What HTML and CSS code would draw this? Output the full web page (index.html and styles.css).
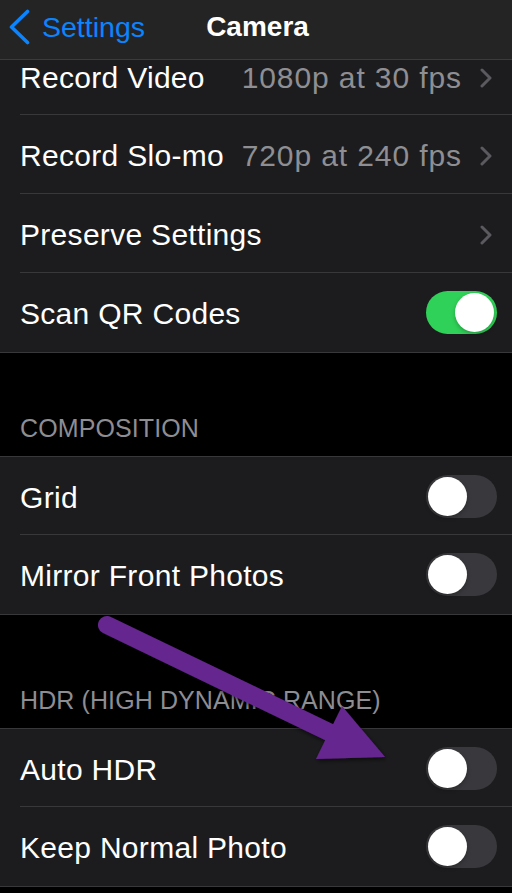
FILE: index.html
```html
<!DOCTYPE html>
<html lang="en">
<head>
<meta charset="utf-8">
<title>Camera</title>
<link rel="stylesheet" href="styles.css">
</head>
<body>
<div class="screen">
  <header class="nav">
    <div class="nav-left">
      <svg class="back-icon" width="22" height="36" viewBox="0 0 22 36"><path d="M19.5 2.5 L3.5 18 L19.5 33.5" fill="none" stroke="#0a84ff" stroke-width="3.6" stroke-linecap="round" stroke-linejoin="round"/></svg>
      <span class="back-label">Settings</span>
    </div>
    <div class="nav-title">Camera</div>
    <div class="nav-right"></div>
  </header>

  <main class="content">
    <section class="group">
      <div class="row">
        <span class="label">Record Video</span>
        <span class="value">1080p at 30 fps</span>
        <svg class="chev" width="14" height="20" viewBox="0 0 14 20"><path d="M3 2 L11 10 L3 18" fill="none" stroke="#5a5a5f" stroke-width="3" stroke-linecap="round" stroke-linejoin="round"/></svg>
      </div>
      <div class="row">
        <span class="label">Record Slo-mo</span>
        <span class="value">720p at 240 fps</span>
        <svg class="chev" width="14" height="20" viewBox="0 0 14 20"><path d="M3 2 L11 10 L3 18" fill="none" stroke="#5a5a5f" stroke-width="3" stroke-linecap="round" stroke-linejoin="round"/></svg>
      </div>
      <div class="row">
        <span class="label">Preserve Settings</span>
        <span class="value"></span>
        <svg class="chev" width="14" height="20" viewBox="0 0 14 20"><path d="M3 2 L11 10 L3 18" fill="none" stroke="#5a5a5f" stroke-width="3" stroke-linecap="round" stroke-linejoin="round"/></svg>
      </div>
      <div class="row row-toggle">
        <span class="label">Scan QR Codes</span>
        <span class="switch on"><span class="knob"></span></span>
      </div>
    </section>

    <div class="section-header first">COMPOSITION</div>
    <section class="group">
      <div class="row row-toggle">
        <span class="label">Grid</span>
        <span class="switch"><span class="knob"></span></span>
      </div>
      <div class="row row-toggle">
        <span class="label">Mirror Front Photos</span>
        <span class="switch"><span class="knob"></span></span>
      </div>
    </section>

    <div class="section-header second">HDR (HIGH DYNAMIC RANGE)</div>
    <section class="group">
      <div class="row row-toggle">
        <span class="label">Auto HDR</span>
        <span class="switch"><span class="knob"></span></span>
      </div>
      <div class="row row-toggle">
        <span class="label">Keep Normal Photo</span>
        <span class="switch"><span class="knob"></span></span>
      </div>
    </section>
  </main>

  <svg class="annotation" width="512" height="893" viewBox="0 0 512 893">
    <defs>
      <filter id="shadow" x="-20%" y="-20%" width="140%" height="140%">
        <feDropShadow dx="1" dy="2" stdDeviation="2" flood-color="#000" flood-opacity="0.6"/>
      </filter>
    </defs>
    <g filter="url(#shadow)" fill="#66268f">
      <line x1="107" y1="625" x2="335" y2="735" stroke="#66268f" stroke-width="18" stroke-linecap="round"/>
      <polygon points="342,706 316,759 385,757"/>
    </g>
  </svg>
</div>
</body>
</html>
```

FILE: styles.css
```css
* {
  box-sizing: border-box;
}

html, body {
  margin: 0;
  padding: 0;
  background: #000;
}

body {
  font-family: "Liberation Sans", Arial, sans-serif;
  color: #fff;
}

.screen {
  position: relative;
  width: 512px;
  height: 893px;
  overflow: hidden;
  background: #000;
}

.nav {
  position: relative;
  z-index: 2;
  height: 60px;
  display: grid;
  grid-template-columns: 1fr auto 1fr;
  align-items: center;
  padding-bottom: 6px;
  background: #242425;
  border-bottom: 1px solid #3b3b3d;
}

.nav-left {
  display: flex;
  align-items: center;
  gap: 12px;
  padding-left: 8px;
}

.back-icon {
  display: block;
}

.back-label {
  font-size: 28.5px;
  color: #0a84ff;
  line-height: 34px;
}

.nav-title {
  font-size: 28px;
  font-weight: 700;
  line-height: 34px;
  color: #fff;
  padding-left: 3px;
}

.content {
  margin-top: -24px;
}

.group {
  background: #1c1c1e;
  border-top: 1px solid #38383a;
  border-bottom: 1px solid #38383a;
}

.row {
  height: 79px;
  display: flex;
  align-items: center;
  padding: 3px 19px 0 20px;
  position: relative;
}

.row + .row::before {
  content: "";
  position: absolute;
  top: -1px;
  left: 20px;
  right: 0;
  height: 1px;
  background: #38383a;
}

.group > .row:first-child {
  height: 78px;
}

.label {
  font-size: 30px;
  line-height: 36px;
  letter-spacing: 0.3px;
  white-space: nowrap;
}

.value {
  margin-left: auto;
  font-size: 30px;
  line-height: 36px;
  color: #8e8e93;
  letter-spacing: 0.9px;
  white-space: nowrap;
}

.chev {
  display: block;
  margin-left: 17px;
  flex: none;
}

.row-toggle {
  padding-right: 15px;
}

.switch {
  margin-left: auto;
  margin-top: -3px;
  width: 71px;
  height: 43px;
  border-radius: 22px;
  background: #39393d;
  padding: 2px;
  display: flex;
  flex: none;
}

.switch.on {
  background: #30d158;
  justify-content: flex-end;
  padding-right: 3px;
}

.knob {
  width: 39px;
  height: 39px;
  border-radius: 50%;
  background: #fff;
  box-shadow: 0 2px 4px rgba(0, 0, 0, 0.25);
}

.section-header {
  font-size: 25px;
  line-height: 30px;
  color: #8d8d93;
  padding: 0 20px 13px;
  letter-spacing: 0.1px;
}

.section-header.first {
  padding-top: 60px;
}

.section-header.second {
  padding-top: 70px;
}

.annotation {
  position: absolute;
  left: 0;
  top: 0;
  pointer-events: none;
  z-index: 3;
}
```
